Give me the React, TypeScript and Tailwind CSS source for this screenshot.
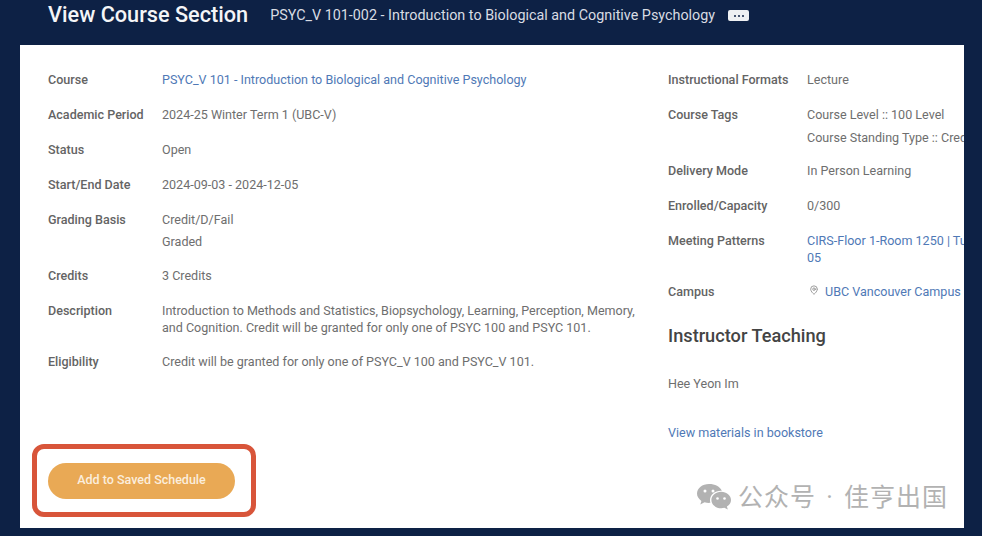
import React from 'react';
import { MapPin } from 'lucide-react';

const link = 'text-[#4f79b6]';

const Row = ({ label, labelWidth, className = '', children }: { label: string; labelWidth: string; className?: string; children: React.ReactNode }) => (
  <div className={`flex leading-[17px] ${className}`}>
    <div className={`${labelWidth} shrink-0 font-medium text-[#646464]`}>{label}</div>
    <div className="min-w-0 text-[#6e6e6e]">{children}</div>
  </div>
);

const WeChatIcon = () => (
  <svg width="36" height="30" viewBox="0 0 36 30" className="shrink-0">
    <path d="M13 1C6.4 1 1 5.2 1 10.600c0 3 1.700 5.500 4.400 7.300L4.300 21.500l4.200-2.200c1.500.4 3 .6 4.500.6.500 0 1 0 1.400-.1-.3-.9-.4-1.800-.4-2.800 0-5.200 4.900-9.300 10.900-9.300h.9C24.100 3.600 19 1 13 1z" fill="#b2b2b2" />
    <circle cx="9" cy="8" r="1.500" fill="#fff" />
    <circle cx="17" cy="8" r="1.500" fill="#fff" />
    <path d="M35 17c0-4.600-4.400-8.300-9.800-8.300S15.400 12.400 15.400 17s4.400 8.300 9.800 8.300c1.100 0 2.200-.2 3.200-.5l3.400 1.800-.9-3C33.500 22 35 19.700 35 17z" fill="#b2b2b2" />
    <circle cx="21.500" cy="15.500" r="1.300" fill="#fff" />
    <circle cx="28.500" cy="15.500" r="1.300" fill="#fff" />
  </svg>
);

export default function App() {
  return (
    <div className="relative flex h-[536px] w-[982px] flex-col overflow-hidden bg-[#0d2145] pl-5 pr-[18px] font-['Roboto','Noto_Sans_CJK_SC',sans-serif] text-[12.55px]">
      {/* Header */}
      <div className="flex h-[45px] shrink-0 items-start pl-7 text-white">
        <h1 className="text-[21.700px] font-medium leading-[29px] text-[#f4f5f7]">View Course Section</h1>
        <span className="ml-[22px] mt-[6px] text-[14.350px] leading-[19px] text-[#d8dce3]">
          PSYC_V 101-002 - Introduction to Biological and Cognitive Psychology
        </span>
        <span className="ml-[13px] mt-[10px] flex h-[11px] w-[21px] items-center justify-center gap-[2px] rounded-[2px] bg-[#eef0f3]">
          <i className="h-[2px] w-[2px] rounded-full bg-[#0d2145]" />
          <i className="h-[2px] w-[2px] rounded-full bg-[#0d2145]" />
          <i className="h-[2px] w-[2px] rounded-full bg-[#0d2145]" />
        </span>
      </div>

      {/* Panel */}
      <div className="flex h-[483px] shrink-0 overflow-hidden bg-white">
        {/* Left column */}
        <div className="flex w-[648px] shrink-0 flex-col pl-7 pt-[26px]">
          <Row label="Course" labelWidth="w-[114px]">
            <span className={link}>PSYC_V 101 - Introduction to Biological and Cognitive Psychology</span>
          </Row>
          <Row label="Academic Period" labelWidth="w-[114px]" className="mt-[18px]">2024-25 Winter Term 1 (UBC-V)</Row>
          <Row label="Status" labelWidth="w-[114px]" className="mt-[18px]">Open</Row>
          <Row label="Start/End Date" labelWidth="w-[114px]" className="mt-[18px]">2024-09-03 - 2024-12-05</Row>
          <Row label="Grading Basis" labelWidth="w-[114px]" className="mt-[18px]">
            <div>Credit/D/Fail</div>
            <div className="mt-[5px]">Graded</div>
          </Row>
          <Row label="Credits" labelWidth="w-[114px]" className="mt-[17px]">3 Credits</Row>
          <Row label="Description" labelWidth="w-[114px]" className="mt-[18px]">
            <div className="w-[482px]">
              Introduction to Methods and Statistics, Biopsychology, Learning, Perception, Memory, and Cognition. Credit will be granted for only one of PSYC 100 and PSYC 101.
            </div>
          </Row>
          <Row label="Eligibility" labelWidth="w-[114px]" className="mt-[17px]">
            Credit will be granted for only one of PSYC_V 100 and PSYC_V 101.
          </Row>
          <div className="mt-auto mb-[11px] ml-[-16px] flex h-[73px] w-[224px] items-center rounded-[12px] border-[5px] border-[#d8553a] pl-[11px]">
            <button className="h-[36px] w-[187px] rounded-full bg-[#e9a955] text-[12.500px] font-medium text-[#fbeedd]">
              Add to Saved Schedule
            </button>
          </div>
        </div>

        {/* Right column */}
        <div className="flex min-w-0 flex-1 flex-col pt-[26px] whitespace-nowrap">
          <Row label="Instructional Formats" labelWidth="w-[139px]">Lecture</Row>
          <Row label="Course Tags" labelWidth="w-[139px]" className="mt-[18px]">
            <div>Course Level :: 100 Level</div>
            <div className="mt-[6px]">Course Standing Type :: Credit</div>
          </Row>
          <Row label="Delivery Mode" labelWidth="w-[139px]" className="mt-[16px]">In Person Learning</Row>
          <Row label="Enrolled/Capacity" labelWidth="w-[139px]" className="mt-[18px]">0/300</Row>
          <Row label="Meeting Patterns" labelWidth="w-[139px]" className="mt-[18px]">
            <div className={link}>CIRS-Floor 1-Room 1250 | Tue</div>
            <div className={link}>05</div>
          </Row>
          <Row label="Campus" labelWidth="w-[139px]" className="mt-[17px]">
            <div className={`flex items-center ${link}`}>
              <MapPin size={10} className="ml-[2px] mr-[6px] mt-[-3px] text-[#8a8a8a]" />
              UBC Vancouver Campus
            </div>
          </Row>
          <h2 className="mt-[24px] text-[18.200px] font-medium leading-[24px] text-[#444]">Instructor Teaching</h2>
          <div className="mt-[27px] leading-[17px] text-[#6e6e6e]">Hee Yeon Im</div>
          <div className={`mt-[32px] leading-[17px] ${link}`}>View materials in bookstore</div>
        </div>
      </div>

      {/* Watermark */}
      <div className="absolute left-[696px] top-[482px] flex items-center gap-[6px]">
        <WeChatIcon />
        <span className="text-[25px] leading-[32px] tracking-[1px] text-[#b2b2b2] [word-spacing:3px]">公众号 · 佳亨出国</span>
      </div>
    </div>
  );
}
